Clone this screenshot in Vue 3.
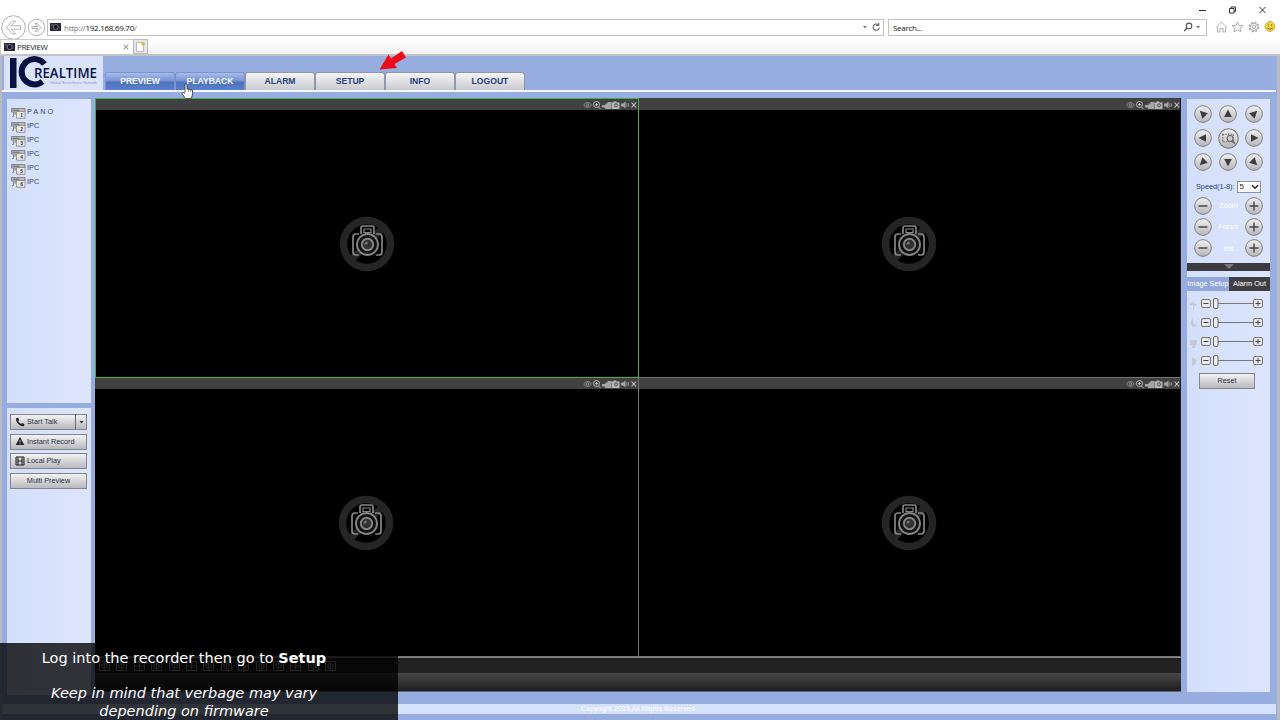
<template>
    <div class="screen">
        <!-- Browser window -->
        <div class="browser">
            <div class="window_controls">
                <svg width="80" height="12" viewBox="0 0 80 12" fill="none" stroke="#333" stroke-width="1">
                    <path d="M2 6.500h7M32.500 4.500h4.500v4.500h-4.500zM34 4.500v-1.500h4.500v4.500h-1.500M62.500 3l6 6M68.500 3l-6 6" />
                </svg>
            </div>
            <div class="address_row">
                <svg class="nav_buttons" width="47" height="25" viewBox="0 0 47 25" fill="none" stroke="#b0b0b0" stroke-width="1">
                    <circle cx="13.500" cy="12.500" r="11.800" />
                    <path d="M12.500 6L6.500 12.500L12.500 19H15.500L11 14.200H20.500V10.800H11L15.500 6z" />
                    <circle cx="36.500" cy="12.500" r="8.200" />
                    <path d="M37 8.300L41 12.500L37 16.700H35L38 13.500H32V11.500H38L35 8.300z" />
                </svg>
                <div class="address">
                    <svg class="favicon" width="11" height="8" viewBox="0 0 11 8"><path d="M0 0h11v8h-11z" fill="#2b2938" /><circle cx="5.700" cy="4" r="2.500" fill="#151522" stroke="#77798c" /><path d="M1 2h2" stroke="#777" /></svg>
                    <span class="url">http://<b>192.168.69.70</b>/</span>
                    <svg class="address_icons" width="18" height="12" viewBox="0 0 18 12">
                        <path d="M0 5h4l-2 2.500z" fill="#777" />
                        <path d="M16.300 6.500a3.100 3.100 0 1 1-1.300-2.900M15.700 1.800v2.700h-2.700" fill="none" stroke="#666" stroke-width="1.100" />
                    </svg>
                </div>
                <div class="search">
                    <span>Search...</span>
                    <svg width="24" height="12" viewBox="0 0 24 12"><circle cx="7" cy="4.900" r="2.800" fill="none" stroke="#555" stroke-width="1.100" /><path d="M5 7L2.200 10" stroke="#555" stroke-width="1.300" /><path d="M14 5h4l-2 2.500z" fill="#777" /></svg>
                </div>
                <svg class="tools" width="62" height="14" viewBox="0 0 62 14" fill="none" stroke="#a6a6a6" stroke-width=".9">
                    <path d="M1.500 7L6.500 2L11.500 7L10.500 8V12H8V8.500H5V12H2.500V8z" />
                    <path d="M22.500 1.800L24 5.500L28 5.700L25 8.200L26 12L22.500 9.800L19 12L20 8.200L17 5.700L21 5.500z" />
                    <circle cx="39" cy="7" r="4.600" stroke-dasharray="2.100 1.500" stroke-width="1.400" />
                    <circle cx="39" cy="7" r="3.600" /><circle cx="39" cy="7" r="1.700" />
                    <circle cx="55" cy="6.500" r="4.900" fill="#f6d545" stroke="#c9a52f" />
                    <path d="M53.300 4.300v1.500M56.700 4.300v1.500M52.300 8q2.700 2.600 5.400 0" stroke="#6b5a21" />
                </svg>
            </div>
            <div class="tab_row">
                <div class="browser_tab">
                    <svg class="favicon" width="11" height="8" viewBox="0 0 11 8"><path d="M0 0h11v8h-11z" fill="#2b2938" /><circle cx="5.700" cy="4" r="2.500" fill="#151522" stroke="#77798c" /><path d="M1 2h2" stroke="#777" /></svg>
                    <span>PREVIEW</span>
                    <svg class="tab_close" width="6" height="6" viewBox="0 0 6 6"><path d="M.7.7l4.600 4.600M5.300.7L.7 5.300" stroke="#999" stroke-width="1.100" /></svg>
                </div>
                <div class="new_tab">
                    <svg width="11" height="12" viewBox="0 0 11 12"><path d="M1.500 1.500h5l2 2v7h-7z" fill="#fff" stroke="#aaa" stroke-width=".8" /><circle cx="8" cy="2.700" r="2" fill="#eab95c" /></svg>
                </div>
            </div>
        </div>

        <!-- Recorder page -->
        <div class="page">
            <div class="header">
                <div class="logo">
                    <svg width="99" height="34" viewBox="0 0 99 34">
                        <path d="M6 2h6.500v30H6z" fill="#08113f" />
                        <path d="M40.500 8A12.700 12.700 0 1 0 38.500 25.500" fill="none" stroke="#08113f" stroke-width="6" />
                        <text x="30" y="22" textLength="63" lengthAdjust="spacingAndGlyphs" class="logo_name">REALTIME</text>
                        <text x="46" y="27.500" textLength="47" lengthAdjust="spacingAndGlyphs" class="logo_sub">Global Surveillance Network</text>
                    </svg>
                </div>
                <div class="menu">
                    <div v-for="(item, i) in menu" :key="item" class="menu_item" :class="{ active: i < 2 }">{{ item }}</div>
                </div>
            </div>

            <div class="content">
                <div class="left_column">
                    <div class="panel devices">
                        <div v-for="(device, i) in devices" :key="i" class="device">
                            <svg width="15" height="12" viewBox="0 0 15 12">
                                <path d="M.5 1.500h13.500v3.500H.5z" fill="#bcbcbc" stroke="#777" stroke-width=".8" />
                                <path d="M1.500 3.200h7" stroke="#666" />
                                <path d="M2.500 5v4.500H1M5 5v2H2.500" fill="none" stroke="#8b8b8b" />
                                <path d="M5.500 4.500h8.500v6.800H5.500z" fill="#e8e8e8" stroke="#888" stroke-width=".8" />
                                <text x="10.500" y="10.300" class="device_no">{{ i + 1 }}</text>
                            </svg>
                            <span :class="{ spaced: i === 0 }">{{ device }}</span>
                        </div>
                    </div>
                    <div class="panel actions">
                        <div class="button">
                            <svg width="10" height="10" viewBox="0 0 10 10"><path d="M1.200 1L3.200.8L4.200 3.200L3.100 4Q4 6 6 7L7 6L9.400 7.100L9 9Q7.500 10 4.500 8Q.5 4.900 1.200 1z" fill="#222" /></svg>
                            <span>Start Talk</span>
                            <div class="drop"><svg width="5" height="4" viewBox="0 0 5 4"><path d="M.5 1h4l-2 2.500z" fill="#333" /></svg></div>
                        </div>
                        <div class="button">
                            <svg width="10" height="10" viewBox="0 0 10 10"><path d="M5 1L9.300 9H.7z" fill="#222" /><path d="M5 4v2.500M5 7.300v1" stroke="#ccc" stroke-width=".9" /></svg>
                            <span>Instant Record</span>
                        </div>
                        <div class="button">
                            <svg width="10" height="10" viewBox="0 0 10 10" fill="none" stroke="#222"><path d="M1 1h8v8H1zM3 1v8M7 1v8M3 5h4" /><path d="M1 3.700h2M1 6.300h2M7 3.700h2M7 6.300h2" stroke-width=".6" /></svg>
                            <span>Local Play</span>
                        </div>
                        <div class="button center"><span>Multi Preview</span></div>
                    </div>
                </div>

                <div class="video_column">
                    <div class="videos">
                        <div v-for="n in 4" :key="n" class="video" :class="{ selected: n === 1 }">
                            <div class="video_bar">
                                <svg width="54" height="10" viewBox="0 0 54 10" fill="none" stroke="#aaa" stroke-width=".9">
                                    <path d="M.6 5Q4.500 0 8.400 5Q4.500 10 .6 5z" stroke="#999" /><circle cx="4.500" cy="5" r="1.200" stroke="#999" />
                                    <circle cx="13.500" cy="4.500" r="3" stroke="#c4c4c4" /><path d="M15.500 7l2 2M12 4.500h3M13.500 3v3" stroke="#c4c4c4" />
                                    <path d="M19 5h3.500v-1.500h2V2h4v2H28v5h-6V7.500h-3z" fill="#a5a5a5" stroke="none" />
                                    <path d="M28.500 2.500h2V1.500h3v1h3v6.500h-8z" fill="#b5b5b5" stroke="none" /><circle cx="33" cy="5.300" r="1.500" stroke="#444" />
                                    <path d="M38 3.500h2L42.500 1.500v7L40 6.500h-2z" fill="#a5a5a5" stroke="none" /><path d="M43.800 3v4M45.500 3.500v3" stroke="#999" />
                                    <path d="M48.500 2.500l4.600 5M53.100 2.500L48.500 7.500" stroke="#ccc" stroke-width="1.100" />
                                </svg>
                            </div>
                            <div class="video_body">
                                <svg width="56" height="58" viewBox="0 0 56 58" fill="none">
                                    <circle cx="28" cy="29" r="23.500" stroke="#252525" stroke-width="7.500" />
                                    <path d="M12 45L44 13" stroke="#252525" stroke-width="7" />
                                    <path d="M20 19h-3q-3 0-3 3v15q0 3 3 3h3M37 19h3q3 0 3 3v15q0 3-3 3h-3" stroke="#858585" stroke-width="1.700" />
                                    <path d="M22 19v-6q0-2 2-2h9q2 0 2 2v6" stroke="#858585" stroke-width="1.700" />
                                    <path d="M25 14h7v3.500h-7z" stroke="#858585" stroke-width="1.200" />
                                    <circle cx="28.500" cy="29.500" r="10.500" fill="#101010" stroke="#858585" stroke-width="1.900" />
                                    <circle cx="28.500" cy="29.500" r="5.700" fill="#303030" stroke="#858585" stroke-width="1.900" />
                                    <path d="M25.500 29.500q0-3 3-3v3z" fill="#777" />
                                </svg>
                            </div>
                        </div>
                    </div>
                    <div class="layout_bar">
                        <svg v-for="n in 14" :key="n" width="11" height="10" viewBox="0 0 11 10" fill="none" stroke="#999">
                            <path d="M.5.500h10v9H.5z" />
                            <path v-if="n % 3" d="M3 3h5v4H3zM5.500 1v8" />
                            <path v-else d="M1 5h9M5.500 1v8" />
                        </svg>
                    </div>
                    <div class="status_bar"></div>
                </div>

                <div class="panel ptz">
                    <div class="pad">
                        <svg v-for="(angle, i) in pad" :key="i" class="round" :class="{ big: i === 4 }" viewBox="0 0 20 20">
                            <circle cx="10" cy="10" r="9.300" fill="url(#metal)" stroke="#777" stroke-width="1" />
                            <path v-if="i !== 4" d="M10 5L14.300 13.300H5.700z" fill="#3d3d3d" :transform="`rotate(${angle} 10 10)`" />
                            <g v-else fill="none" stroke="#666">
                                <path d="M4.500 6h10v7h-10z" stroke-dasharray="1.500 1" />
                                <circle cx="11.500" cy="10" r="2.800" fill="#ccc" /><path d="M13.300 12l2.700 3" stroke-width="1.600" />
                            </g>
                        </svg>
                    </div>
                    <div class="speed">
                        <span>Speed(1-8):</span>
                        <div class="select">5<svg width="8" height="6" viewBox="0 0 8 6"><path d="M1 1.200l3 3l3-3" fill="none" stroke="#222" stroke-width="1.500" /></svg></div>
                    </div>
                    <div class="lens">
                        <template v-for="name in lens" :key="name">
                            <svg class="round" viewBox="0 0 20 20"><circle cx="10" cy="10" r="9.300" fill="url(#metal)" stroke="#777" /><path d="M5 10h10" stroke="#444" stroke-width="1.600" /></svg>
                            <span>{{ name }}</span>
                            <svg class="round" viewBox="0 0 20 20"><circle cx="10" cy="10" r="9.300" fill="url(#metal)" stroke="#777" /><path d="M5 10h10M10 5v10" stroke="#444" stroke-width="1.600" /></svg>
                        </template>
                    </div>
                    <div class="fold"><svg width="10" height="5" viewBox="0 0 10 5"><path d="M0 0h10L5 5z" fill="#777" /></svg></div>
                    <div class="image_tabs">
                        <div>Image Setup</div>
                        <div class="dark">Alarm Out</div>
                    </div>
                    <div class="sliders">
                        <svg v-for="(mark, i) in marks" :key="i" width="83" height="19" viewBox="0 0 83 19" fill="none">
                            <path :d="mark" fill="#c5c9d8" />
                            <path d="M29 9.500h37" stroke="#777" stroke-width="1" />
                            <rect x="14.500" y="5.500" width="9" height="8" rx="1.500" fill="#e9e9ed" stroke="#777" />
                            <path d="M16.500 9.500h5" stroke="#444" />
                            <rect x="26.500" y="4.500" width="4.500" height="10" rx="1.500" fill="#eee" stroke="#666" />
                            <rect x="66.500" y="5.500" width="9" height="8" rx="1.500" fill="#e9e9ed" stroke="#777" />
                            <path d="M68.500 9.500h5M71 7v5" stroke="#444" />
                        </svg>
                    </div>
                    <div class="button reset">Reset</div>
                </div>
            </div>
            <div class="footer">Copyright 2015,All Rights Reserved</div>
        </div>

        <!-- Shared gradient for the round buttons -->
        <svg class="defs" width="0" height="0">
            <defs><linearGradient id="metal" x1="0" y1="0" x2="0" y2="1"><stop offset="0" stop-color="#f1f1f3" /><stop offset="1" stop-color="#b6b6ba" /></linearGradient></defs>
        </svg>

        <!-- Tutorial overlays -->
        <svg class="arrow" width="28" height="22" viewBox="0 0 28 22"><path d="M.5 19.500L9.500 4.500L12 8.500L23 1L27 7.500L15.500 14L18 18z" fill="#ec0c18" /></svg>
        <svg class="pointer" width="14" height="17" viewBox="0 0 14 17"><path d="M4 9V2q0-1.300 1-1.300T6 2V6L11.500 7.200V12L10 15.500H4.500L1 10.500Q1.300 8.300 4 10.500" fill="#fff" stroke="#333" stroke-width=".8" /><path d="M7.500 6.500v2.500M9.500 7v2" stroke="#777" stroke-width=".7" /></svg>
        <div class="caption">
            <p class="line1">Log into the recorder then go to <b>Setup</b></p>
            <p class="line2">Keep in mind that verbage may vary</p>
            <p class="line3">depending on firmware</p>
        </div>
    </div>
</template>

<script setup>
const menu = ['PREVIEW', 'PLAYBACK', 'ALARM', 'SETUP', 'INFO', 'LOGOUT'];
const devices = ['PANO', 'IPC', 'IPC', 'IPC', 'IPC', 'IPC'];
const lens = ['Zoom', 'Focus', 'Iris'];

// rotation of every arrow on the pan / tilt pad, row by row
const pad = [-45, 0, 45, -90, 0, 90, -135, 180, 135];

// faded marks in front of the sliders
const marks = [
    'M2 11L6 8L10 11L8 12L7 10V15H6V11z',
    'M6 5Q2 9 5 13Q8 15 10 12Q5 11 6 5z',
    'M3 8h7v5H3zM5 13h3v3H5z',
    'M5 6L10 9L8 13L5 15z',
];
</script>

<style>
body {
    margin: 0;
    overflow: hidden;
}
</style>

<style scoped>
* {
    box-sizing: border-box;
}

svg {
    display: block;
    flex: none;
}

.screen {
    /* shape */
    position: relative;
    width: 1280px;
    height: 720px;
    overflow: hidden;

    /* font */
    font-family: "Liberation Sans", Arial, sans-serif;
    font-size: 7.3px;
    white-space: nowrap;
}

/* browser */
.browser {
    height: 56px;
    background: linear-gradient(#fff 39px, #f1f1f1 54px);
    border-bottom: 2px solid #c3c4c9;
    font-family: "Open Sans", "Noto Sans", sans-serif;
}

.window_controls {
    display: flex;
    justify-content: flex-end;
    height: 15px;
    padding: 4px 3px 0 0;
}

.address_row {
    display: flex;
    align-items: center;
    height: 24px;
}

.address {
    display: flex;
    align-items: center;
    width: 837px;
    height: 17px;
    padding-left: 2px;
    border: 1px solid #c2c2c2;
    background: #fff;
}

.url {
    margin-left: 3px;
    font-size: 8px;
    letter-spacing: -0.28px;
    color: #777;
}

.url b {
    font-weight: 400;
    color: #111;
}

.address_icons {
    margin-left: auto;
    margin-right: 2px;
}

.search {
    display: flex;
    align-items: center;
    justify-content: space-between;
    width: 319px;
    height: 17px;
    margin-left: 4px;
    padding: 0 0 0 4px;
    border: 1px solid #c2c2c2;
    font-size: 8px;
    letter-spacing: -0.3px;
    color: #222;
    background: #fff;
}

.tools {
    margin-left: 8px;
}

.tab_row {
    display: flex;
    height: 15px;
}

.browser_tab {
    display: flex;
    align-items: center;
    width: 133px;
    padding: 0 4px 1px 3px;
    border-top: 1px solid #ccc;
    border-left: 1px solid #ccc;
    background: #fff;
    font-size: 8px;
    letter-spacing: -0.35px;
    color: #222;
}

.browser_tab span {
    margin-left: 2px;
}

.tab_close {
    margin-left: auto;
}

.new_tab {
    display: flex;
    align-items: center;
    justify-content: center;
    width: 15px;
    border: 1px solid #bbb;
    background: #e6e6e6;
}

/* page */
.page {
    height: 664px;
    border-left: 2px solid #b8bbc6;
    border-right: 3px solid #b8bbc6;
    background: #98addf;
}

.header {
    display: flex;
    height: 36px;
    margin-right: 1px;
    border-bottom: 2px solid #f3f7ff;
}

.logo {
    width: 99px;
    height: 34px;
    margin-left: 2px;
    background: #dae3fb;
}

.logo_name {
    font-family: "Open Sans", sans-serif;
    font-size: 13.5px;
    font-weight: 600;
    fill: #08113f;
    stroke: #dae3fb;
    stroke-width: 1.2px;
    paint-order: stroke;
}

.logo_sub {
    font-size: 4px;
    fill: #9299b5;
}

.menu {
    display: flex;
    align-items: flex-end;
    margin-left: 2px;
}

.menu_item {
    width: 70px;
    height: 18px;
    border: 1px solid #8e96aa;
    border-bottom: 0;
    border-radius: 3px 3px 0 0;
    background: linear-gradient(#f5f5f7, #c9cad0);
    font-size: 8.6px;
    font-weight: 700;
    line-height: 17px;
    text-align: center;
    color: #27407f;
}

.menu_item.active {
    border-color: #7d93cc;
    background: linear-gradient(#a9bceb, #7893d4 45%, #4e70bd 55%, #5d81cc);
    color: #f1f6ff;
}

.content {
    display: flex;
    height: 600px;
    padding-top: 6px;
}

.panel {
    background: linear-gradient(90deg, #d4dffb, #dce5fc);
}

.left_column {
    width: 84px;
    margin-left: 5px;
    padding-top: 1px;
}

.devices {
    height: 304px;
    padding: 6px 0 0 4px;
}

.device {
    display: flex;
    align-items: center;
    height: 13.9px;
    gap: 1px;
    color: #34457e;
}

.device svg {
    position: relative;
    top: 1px;
}

.device_no {
    font-size: 4.8px;
    font-weight: 700;
    text-anchor: middle;
    fill: #333;
}

.spaced {
    letter-spacing: 2px;
}

.actions {
    display: flex;
    flex-direction: column;
    gap: 3.4px;
    height: 287px;
    margin-top: 5px;
    padding: 6px 4px 0 3px;
}

.button {
    display: flex;
    align-items: center;
    height: 16.200px;
    flex: none;
    padding: 0 0 1px 4px;
    border: 1px solid #83858f;
    background: linear-gradient(#f3f3f3, #d6d6d8 50%, #b9b9bd);
    color: #29303e;
}

.button span {
    margin-left: 2px;
}

.center {
    justify-content: center;
    padding: 0 2px 0 0;
}

.drop {
    display: flex;
    align-items: center;
    justify-content: center;
    width: 11px;
    height: 15px;
    margin-left: auto;
    border-left: 1px solid #666;
}

/* video */
.video_column {
    width: 1086px;
    margin-left: 4px;
}

.videos {
    display: grid;
    grid-template-columns: 544px 542px;
    grid-template-rows: 280px 279px;
    border-bottom: 1px solid #858585;
    background: #000;
}

.video {
    border-right: 1px solid #747474;
    border-bottom: 1px solid #747474;
}

.video:nth-child(even) {
    border-right-color: #222;
}

.video.selected {
    border: 1px solid #3fae48;
}

.video_bar {
    display: flex;
    justify-content: flex-end;
    height: 12px;
    padding: 2px 0 0;
    background: #414141;
}

.video:nth-child(odd) .video_bar {
    padding-right: 1px;
}

.video:nth-child(n+3) .video_bar {
    height: 11px;
    padding-top: 1px;
}

.video.selected .video_bar {
    height: 11px;
    padding-top: 1px;
}

.video_body {
    display: flex;
    align-items: center;
    justify-content: center;
    height: 267px;
    padding-right: 1px;
}

.layout_bar {
    display: flex;
    align-items: center;
    gap: 6.4px;
    height: 15px;
    padding-left: 4px;
    background: #222;
}

.status_bar {
    height: 19px;
    border-bottom: 1px solid #62657a;
    background: linear-gradient(#484848, #1e1e1e);
}

/* camera control */
.ptz {
    width: 83px;
    height: 593px;
    margin: 1px 0 0 6px;
    padding-top: 3px;
}

.pad {
    display: grid;
    grid-template-columns: repeat(3, 25.3px);
    grid-template-rows: repeat(3, 24px);
    justify-content: center;
    place-items: center;
}

.round {
    width: 18px;
    height: 18px;
}

.big {
    width: 21px;
    height: 21px;
}

.speed {
    display: flex;
    align-items: center;
    height: 13px;
    margin-top: 6px;
    padding-left: 9px;
    color: #27407f;
}

.select {
    display: flex;
    align-items: center;
    justify-content: space-between;
    width: 24px;
    height: 12px;
    margin-left: 2px;
    padding: 0 1px 0 2px;
    border: 1px solid #8892ab;
    background: #fff;
    font-size: 8px;
    color: #222;
}

.lens {
    display: grid;
    grid-template-columns: 25px 26px 25px;
    grid-template-rows: repeat(3, 21.300px);
    justify-content: center;
    place-items: center;
    margin-top: 2px;
    color: #fff;
}

.fold {
    display: flex;
    align-items: center;
    justify-content: center;
    height: 8px;
    margin-top: 4px;
    background: #3c3c40;
}

.image_tabs {
    display: flex;
    height: 14px;
    margin-top: 6px;
    line-height: 14px;
    text-align: center;
    color: #fff;
}

.image_tabs div {
    width: 42px;
    background: #91a6d9;
}

.image_tabs .dark {
    width: 41px;
    background: #3f3f43;
}

.sliders {
    padding-top: 3px;
}

.reset {
    justify-content: center;
    width: 56px;
    margin: 3px 0 0 12px;
    padding: 0;
}

.footer {
    height: 10px;
    margin: 12px 1px 0 0;
    padding-left: 579px;
    background: #d6e1fb;
    font-size: 7.2px;
    line-height: 10px;
    color: #fff;
}

/* overlays */
.defs {
    position: absolute;
}

.arrow {
    position: absolute;
    left: 379px;
    top: 50px;
}

.pointer {
    position: absolute;
    left: 181px;
    top: 83px;
}

.caption {
    /* position */
    position: absolute;
    left: 0;
    top: 643px;

    /* shape */
    width: 398px;
    height: 77px;
    padding: 6px 30px 0 0;

    /* font */
    background: rgba(0, 0, 0, 0.78);
    font-family: "DejaVu Sans", Verdana, sans-serif;
    font-size: 14.500px;
    line-height: 18px;
    text-align: center;
    color: #fff;
}

.caption p {
    margin: 0;
}

.line2 {
    padding-top: 17px;
}

.line2,
.line3 {
    font-style: italic;
}
</style>
